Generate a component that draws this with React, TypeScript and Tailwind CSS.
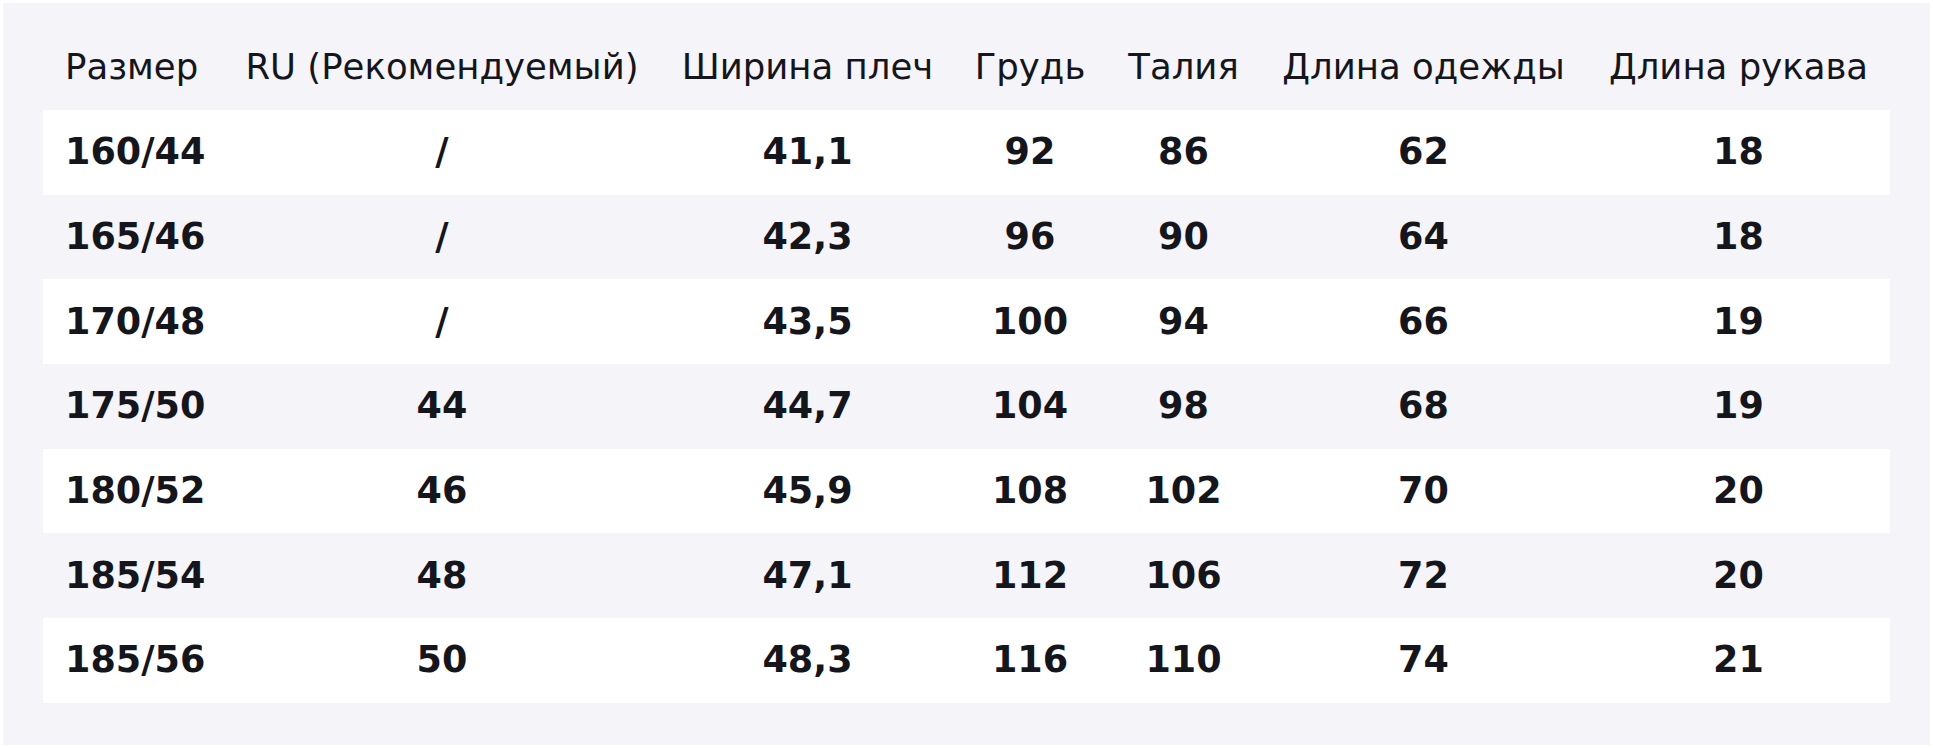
const headers = [
  'Размер',
  'RU (Рекомендуемый)',
  'Ширина плеч',
  'Грудь',
  'Талия',
  'Длина одежды',
  'Длина рукава',
];

const rows = [
  ['160/44', '/', '41,1', '92', '86', '62', '18'],
  ['165/46', '/', '42,3', '96', '90', '64', '18'],
  ['170/48', '/', '43,5', '100', '94', '66', '19'],
  ['175/50', '44', '44,7', '104', '98', '68', '19'],
  ['180/52', '46', '45,9', '108', '102', '70', '20'],
  ['185/54', '48', '47,1', '112', '106', '72', '20'],
  ['185/56', '50', '48,3', '116', '110', '74', '21'],
];

export default function App() {
  return (
    <div className="bg-white p-[3px] font-['DejaVu_Sans',sans-serif] text-[#15151c]">
      <div className="bg-[#f4f4f9] px-[40px] pt-[40px] pb-[42px]">
        <table className="w-full table-fixed border-collapse">
          <colgroup>
            <col className="w-[179px]" />
            <col className="w-[440px]" />
            <col className="w-[291px]" />
            <col className="w-[154px]" />
            <col className="w-[153px]" />
            <col className="w-[327px]" />
            <col className="w-[303px]" />
          </colgroup>
          <thead>
            <tr>
              {headers.map((h, j) => (
                <th
                  key={h}
                  className={`pt-[3px] pb-[22px] text-[35.5px] font-normal leading-[42px] whitespace-nowrap ${
                    j === 0 ? 'pl-[22px] pr-0 text-left' : 'px-0 text-center'
                  }`}
                >
                  {h}
                </th>
              ))}
            </tr>
          </thead>
          <tbody>
            {rows.map((r, i) => (
              <tr key={r[0] + i} className={i % 2 === 0 ? 'bg-white' : ''}>
                {r.map((c, j) => (
                  <td
                    key={j}
                    className={`h-[84.7px] py-0 text-[36.5px] font-bold leading-[42px] whitespace-nowrap ${
                      j === 0 ? 'pl-[22px] pr-0 text-left' : 'px-0 text-center'
                    }`}
                  >
                    {c}
                  </td>
                ))}
              </tr>
            ))}
          </tbody>
        </table>
      </div>
    </div>
  );
}
